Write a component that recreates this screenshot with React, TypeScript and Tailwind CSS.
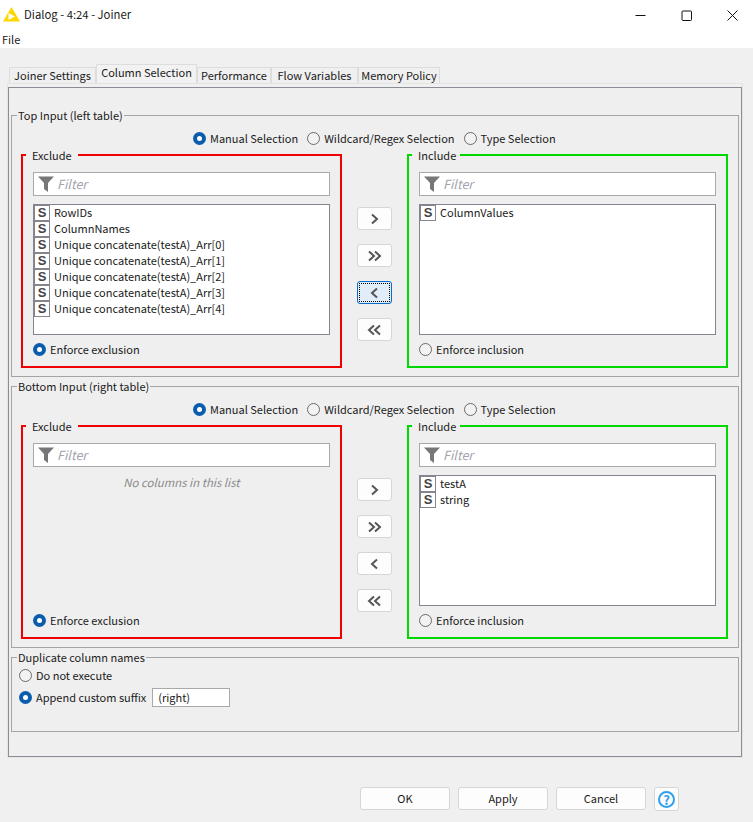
import type { ReactNode } from "react";

const topExclude = [
  "RowIDs",
  "ColumnNames",
  "Unique concatenate(testA)_Arr[0]",
  "Unique concatenate(testA)_Arr[1]",
  "Unique concatenate(testA)_Arr[2]",
  "Unique concatenate(testA)_Arr[3]",
  "Unique concatenate(testA)_Arr[4]",
];

const tabs = [
  { name: "Joiner Settings", width: "w-[87px]" },
  { name: "Column Selection", width: "w-[101px]", active: true },
  { name: "Performance", width: "w-[74px]" },
  { name: "Flow Variables", width: "w-[87px]" },
  { name: "Memory Policy", width: "w-[82px]" },
];

function Radio({ on, label }: { on?: boolean; label: string }) {
  return (
    <span className="flex items-center gap-[4px] whitespace-nowrap">
      {on ? (
        <span className="flex h-[13px] w-[13px] items-center justify-center rounded-full bg-[#0a5cad]">
          <span className="h-[5px] w-[5px] rounded-full bg-white" />
        </span>
      ) : (
        <span className="h-[13px] w-[13px] rounded-full border border-[#6b6b6b] bg-[#f2f2f2]" />
      )}
      {label}
    </span>
  );
}

function Group({ title, className, children }: { title: string; className: string; children: ReactNode }) {
  return (
    <fieldset className={`border border-[#a3a3a8] ${className}`}>
      <legend className="ml-[5px] px-[1px] leading-[14px]">{title}</legend>
      {children}
    </fieldset>
  );
}

function Funnel() {
  return (
    <svg width="16" height="16" viewBox="0 0 16 16" className="shrink-0">
      <path d="M0 0.5H16L10 7V16L6 13V7Z" fill="#777777" />
    </svg>
  );
}

function Chevrons({ dir, double }: { dir: "left" | "right"; double?: boolean }) {
  const d = double ? "M2 1.5L7 6L2 10.5M8 1.5L13 6L8 10.5" : "M5 1.5L10 6L5 10.5";
  return (
    <svg width="15" height="12" viewBox="0 0 15 12" className={dir === "left" ? "-scale-x-100" : ""}>
      <path d={d} fill="none" stroke="#555555" strokeWidth="2" />
    </svg>
  );
}

function ArrowButton({ dir, double, focused }: { dir: "left" | "right"; double?: boolean; focused?: boolean }) {
  if (focused) {
    return (
      <button className="flex h-[23px] w-[35px] items-center justify-center rounded-[3px] border border-[#0a6cc8] bg-[#e1edf8] p-[1px]">
        <span className="flex h-full w-full items-center justify-center border border-dotted border-black">
          <Chevrons dir={dir} double={double} />
        </span>
      </button>
    );
  }
  return (
    <button className="flex h-[23px] w-[35px] items-center justify-center rounded-[3px] border border-[#d6d6d6] bg-[#fdfdfd]">
      <Chevrons dir={dir} double={double} />
    </button>
  );
}

function ColumnBox({
  title,
  color,
  legendWidth,
  items,
  emptyText,
  radio,
  radioOn,
}: {
  title: string;
  color: string;
  legendWidth: string;
  items: string[];
  emptyText?: boolean;
  radio: string;
  radioOn?: boolean;
}) {
  return (
    <fieldset className={`h-[220px] w-[321px] shrink-0 border-2 ${color}`}>
      <legend className={`ml-[3px] h-[14px] pl-[6px] leading-[14px] ${legendWidth}`}>{title}</legend>
      <div className="px-[10px] pt-[10px]">
        <div className="flex h-[24px] w-[297px] items-center gap-[3px] border border-[#a9a9a9] bg-white pl-[4px]">
          <Funnel />
          <span className="text-[12.5px] italic text-[#a3a3ad]">Filter</span>
        </div>
        {emptyText ? (
          <div className="h-[139px] w-[297px] pt-[7px] text-center text-[11.4px] italic text-[#8a8a8a]">
            No columns in this list
          </div>
        ) : (
          <ul className="mt-[8px] h-[131px] w-[297px] border border-[#85858f] bg-white">
            {items.map((item) => (
              <li key={item} className="flex h-[16px] items-center gap-[4px]">
                <span className="flex h-[16px] w-[16px] items-center justify-center border border-[#85858f] font-['Liberation_Sans',sans-serif] text-[13px] font-bold text-[#444444]">
                  S
                </span>
                <span className="pb-[2px]">{item}</span>
              </li>
            ))}
          </ul>
        )}
        <div className="mt-[6px] h-[14px]">
          <Radio on={radioOn} label={radio} />
        </div>
      </div>
    </fieldset>
  );
}

function InputGroup({
  title,
  exclude,
  include,
  className,
}: {
  title: string;
  exclude: string[];
  include: string[];
  className: string;
}) {
  return (
    <Group title={title} className={`h-[269px] ${className}`}>
      <div className="px-[9px]">
        <div className="flex h-[26px] items-center gap-[9px] pl-[172px] pt-[6px]">
          <Radio on label="Manual Selection" />
          <Radio label="Wildcard/Regex Selection" />
          <Radio label="Type Selection" />
        </div>
        <div className="flex">
          <ColumnBox
            title="Exclude"
            color="border-[#f00000]"
            legendWidth="w-[52px]"
            items={exclude}
            emptyText={exclude.length === 0}
            radio="Enforce exclusion"
            radioOn
          />
          <div className="flex w-[65px] flex-col items-center gap-[14px] pt-[59px]">
            <ArrowButton dir="right" />
            <ArrowButton dir="right" double />
            <ArrowButton dir="left" focused={exclude.length > 0} />
            <ArrowButton dir="left" double />
          </div>
          <ColumnBox
            title="Include"
            color="border-[#00d800]"
            legendWidth="w-[48px]"
            items={include}
            radio="Enforce inclusion"
          />
        </div>
      </div>
    </Group>
  );
}

export default function App() {
  return (
    <div className="flex h-[822px] w-[753px] flex-col overflow-hidden bg-[#f0f0f0] font-['Noto_Sans_CJK_JP','Noto_Sans',sans-serif] text-[11px] text-[#1a1a1a]">
      <div className="flex h-[30px] shrink-0 items-center bg-white pl-[3px] text-[11.3px]">
        <svg width="17" height="16" viewBox="0 0 17 16" className="mr-[4px]">
          <path d="M8.5 0L17 14.5H0Z" fill="#fdd800" />
          <path d="M5.5 6L12 9.5L5.5 13Z" fill="#ffffff" />
        </svg>
        <span className="pb-[2px]">Dialog - 4:24 - Joiner</span>
        <div className="ml-auto flex items-center gap-[35px] pr-[15px]">
          <svg width="11" height="11" viewBox="0 0 11 11">
            <path d="M0.5 5.5H10.5" stroke="#111111" />
          </svg>
          <svg width="11" height="11" viewBox="0 0 11 11">
            <rect x="1" y="1" width="9.5" height="9.5" rx="1" fill="none" stroke="#111111" />
          </svg>
          <svg width="11" height="11" viewBox="0 0 11 11">
            <path d="M0.5 0.5L10.5 10.5M10.5 0.5L0.5 10.5" stroke="#111111" />
          </svg>
        </div>
      </div>
      <div className="flex h-[18px] shrink-0 items-center bg-white pl-[2px]">File</div>

      <div className="mt-[17px] flex h-[18px] shrink-0 items-end pl-[9px]">
        {tabs.map((tab) => (
          <div
            key={tab.name}
            className={
              tab.active
                ? `relative z-10 flex h-[19px] items-center justify-center border border-b-0 border-[#dddddd] bg-[#f2f2f2] pb-[3px] ${tab.width}`
                : `flex h-[16px] items-center justify-center border border-b-0 border-[#dddddd] bg-[#f0f0f0] ${tab.width}`
            }
          >
            {tab.name}
          </div>
        ))}
      </div>

      <div className="ml-[7px] h-[675px] w-[736px] shrink-0 border border-[#e4e4e4] pt-[3px]">
        <div className="h-[670px] border border-[#8c8c96] bg-[#efefef] px-[2px] pt-[20px]">
          <InputGroup title="Top Input (left table)" exclude={topExclude} include={["ColumnValues"]} className="" />
          <InputGroup title="Bottom Input (right table)" exclude={[]} include={["testA", "string"]} className="mt-[2px]" />
          <Group title="Duplicate column names" className="mt-[2px] h-[82px]">
            <div className="px-[7px]">
              <div className="flex h-[23px] items-center">
                <Radio label="Do not execute" />
              </div>
              <div className="flex h-[20px] items-center gap-[6px]">
                <Radio on label="Append custom suffix" />
                <input
                  readOnly
                  value="(right)"
                  className="h-[19px] w-[78px] border border-[#a9a9a9] bg-white px-[5px] outline-none"
                />
              </div>
            </div>
          </Group>
        </div>
      </div>

      <div className="flex items-start gap-[8px] pl-[360px] pt-[29px]">
        <button className="h-[23px] w-[90px] rounded-[3px] border border-[#d6d6d6] bg-[#fdfdfd]">OK</button>
        <button className="h-[23px] w-[90px] rounded-[3px] border border-[#d6d6d6] bg-[#fdfdfd]">Apply</button>
        <button className="h-[23px] w-[90px] rounded-[3px] border border-[#d6d6d6] bg-[#fdfdfd]">Cancel</button>
        <button className="flex h-[24px] w-[25px] items-center justify-center rounded-[3px] border border-[#d6d6d6] bg-[#fdfdfd]">
          <span className="flex h-[17px] w-[17px] items-center justify-center rounded-full border-2 border-[#2f9ff0] text-[13px] font-bold leading-none text-[#2f9ff0]">
            ?
          </span>
        </button>
      </div>
    </div>
  );
}
